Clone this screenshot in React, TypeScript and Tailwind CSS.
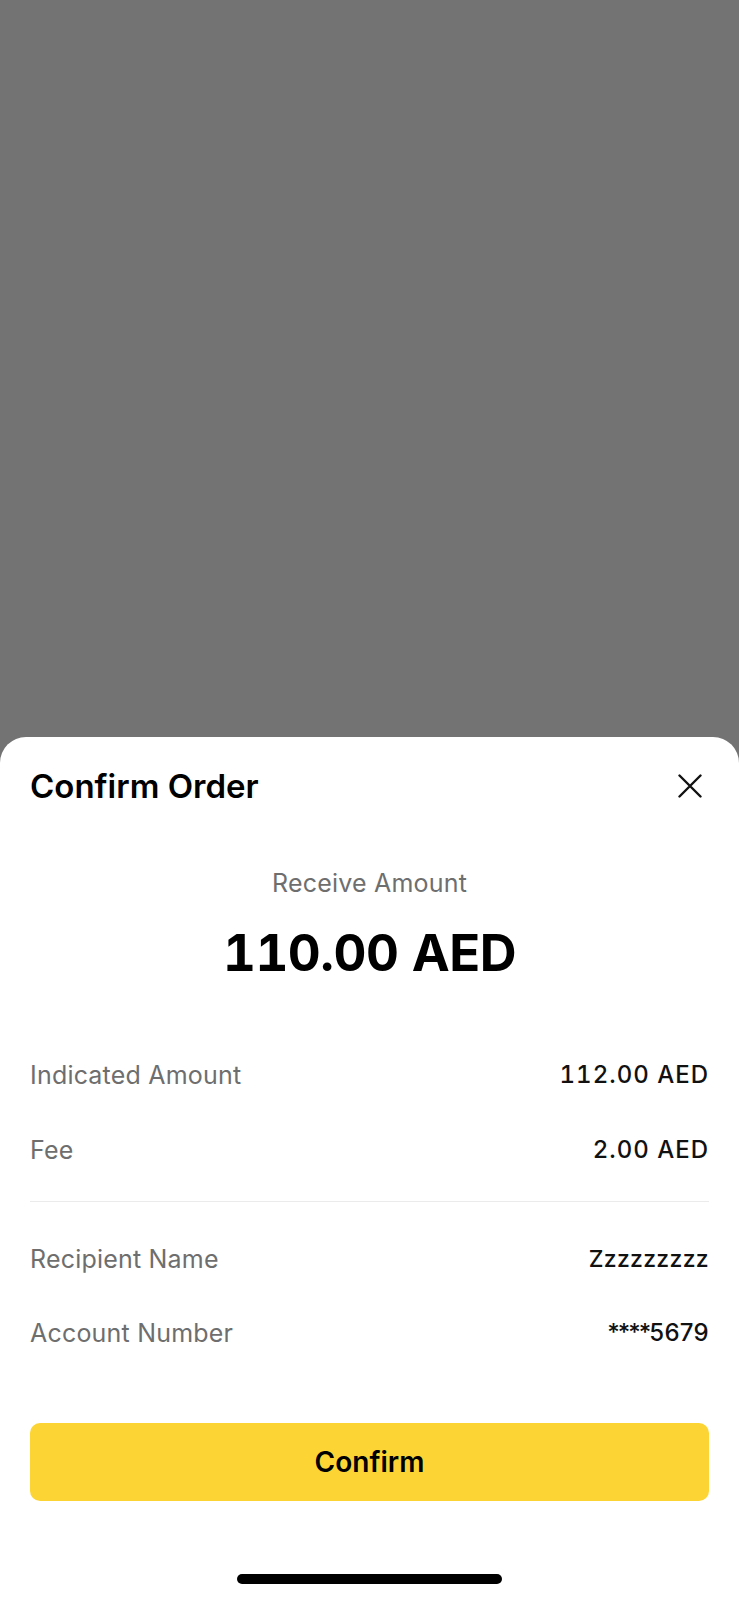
import React from "react";

const rows1 = [
  { label: "Indicated Amount", value: "112.00 AED" },
  { label: "Fee", value: "2.00 AED" },
];

function Row({ label, children }: { label: string; children: React.ReactNode }) {
  return (
    <div className="flex h-[32px] items-center justify-between leading-[32px]">
      <span className="text-[25px] font-normal tracking-[0.2px] text-[#6e6e6e]">{label}</span>
      <span className="text-[24px] font-medium tracking-[0.3px] text-[#111111]">{children}</span>
    </div>
  );
}

export default function App() {
  return (
    <div
      className="flex h-[1600px] w-full flex-col bg-[#737373]"
      style={{ fontFamily: 'Inter, "Liberation Sans", Arial, sans-serif' }}
    >
      <div className="flex-1" />
      <div className="flex flex-col rounded-t-[26px] bg-white">
        <div className="flex h-[98px] items-center justify-between px-[30px]">
          <h1 className="text-[33px] font-semibold leading-[40px] text-black">Confirm Order</h1>
          <button className="mr-[7px] flex h-[24px] w-[24px] items-center justify-center" aria-label="Close">
            <svg width="24" height="24" viewBox="0 0 24 24" fill="none">
              <path d="M1.5 1.5L22.5 22.5M22.5 1.5L1.5 22.5" stroke="#111111" strokeWidth="2.4" strokeLinecap="round" />
            </svg>
          </button>
        </div>

        <div className="mt-[32px] text-center text-[25px] leading-[32px] tracking-[0.2px] text-[#6e6e6e]">
          Receive Amount
        </div>
        <div className="mt-[24px] text-center text-[51px] font-bold tabular-nums leading-[60px] tracking-[-0.5px] text-black">
          110.00 AED
        </div>

        <div className="mt-[76px] flex flex-col gap-[43px] px-[30px]">
          {rows1.map((r) => (
            <Row key={r.label} label={r.label}>
              <span className="tabular-nums tracking-[1px]">{r.value}</span>
            </Row>
          ))}
        </div>
        <div className="mx-[30px] mt-[35px] h-px bg-[#ebebeb]" />
        <div className="mt-[41px] flex flex-col gap-[42px] px-[30px]">
          <Row label="Recipient Name">
            <span className="text-[23px]">Zzzzzzzzz</span>
          </Row>
          <Row label="Account Number">
            <span className="tracking-[-2px]">****</span>
            <span>5679</span>
          </Row>
        </div>

        <div className="mt-[74px] px-[30px]">
          <button className="flex h-[78px] w-full items-center justify-center rounded-[10px] bg-[#fcd535] text-[28px] font-semibold text-black">
            Confirm
          </button>
        </div>

        <div className="mt-[73px] mb-[16px] flex justify-center">
          <div className="h-[10px] w-[265px] rounded-full bg-black" />
        </div>
      </div>
    </div>
  );
}
